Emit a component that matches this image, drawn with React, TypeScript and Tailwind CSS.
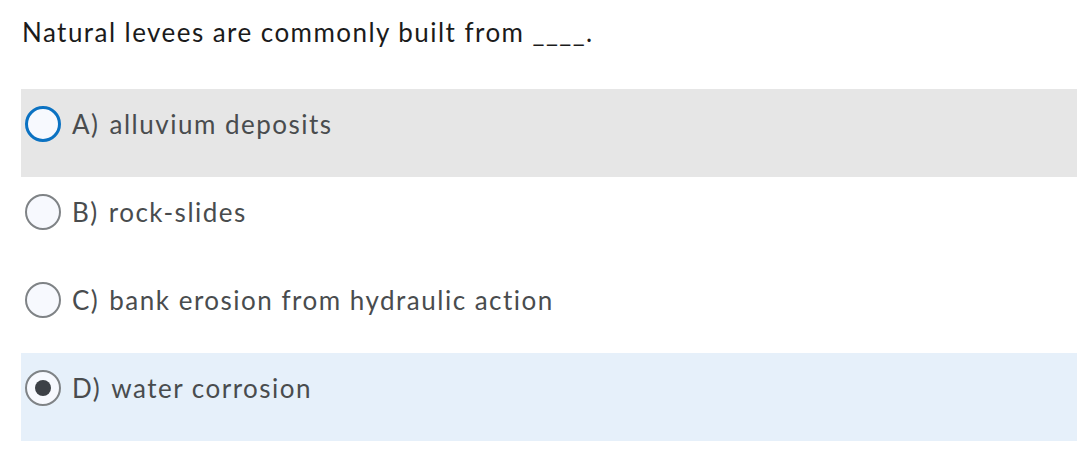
type Choice = {
  label: string;
  text: string;
  state: "focus" | "idle" | "checked";
};

const CHOICES: Choice[] = [
  { label: "A)", text: "alluvium deposits", state: "focus" },
  { label: "B)", text: "rock-slides", state: "idle" },
  { label: "C)", text: "bank erosion from hydraulic action", state: "idle" },
  { label: "D)", text: "water corrosion", state: "checked" },
];

function Radio({ state }: { state: Choice["state"] }) {
  if (state === "focus") {
    return (
      <span className="flex size-[36px] shrink-0 items-center justify-center rounded-full border-[3px] border-[#0b72c2] bg-[#f7f9fe]" />
    );
  }
  return (
    <span className="flex size-[36px] shrink-0 items-center justify-center rounded-full border-2 border-[#7f8386] bg-[#f7f9fe]">
      {state === "checked" && (
        <span className="size-[16px] rounded-full bg-[#3d4147]" />
      )}
    </span>
  );
}

export default function App() {
  return (
    <div
      className="min-h-[470px] w-full bg-white pl-[21px]"
      style={{ fontFamily: "Lato, 'Open Sans', sans-serif" }}
    >
      <div className="h-[89px] pl-[1px] pt-[17px]">
        <p className="text-[26px] leading-[30px] tracking-[1.45px] text-[#1b1b1b]">
          Natural levees are commonly built from ____.
        </p>
      </div>

      <div className="flex flex-col">
        {CHOICES.map((choice) => (
          <div
            key={choice.label}
            className={`flex h-[88px] items-start gap-[11px] pl-[4px] pt-[17px] ${
              choice.state === "focus"
                ? "bg-[#e6e6e6]"
                : choice.state === "checked"
                  ? "bg-[#e6f0fa]"
                  : "bg-white"
            }`}
          >
            <Radio state={choice.state} />
            <span className="flex h-[36px] items-center gap-[10px] text-[26px] tracking-[1.5px] text-[#494c4e]">
              <span>{choice.label}</span>
              <span>{choice.text}</span>
            </span>
          </div>
        ))}
      </div>
    </div>
  );
}
